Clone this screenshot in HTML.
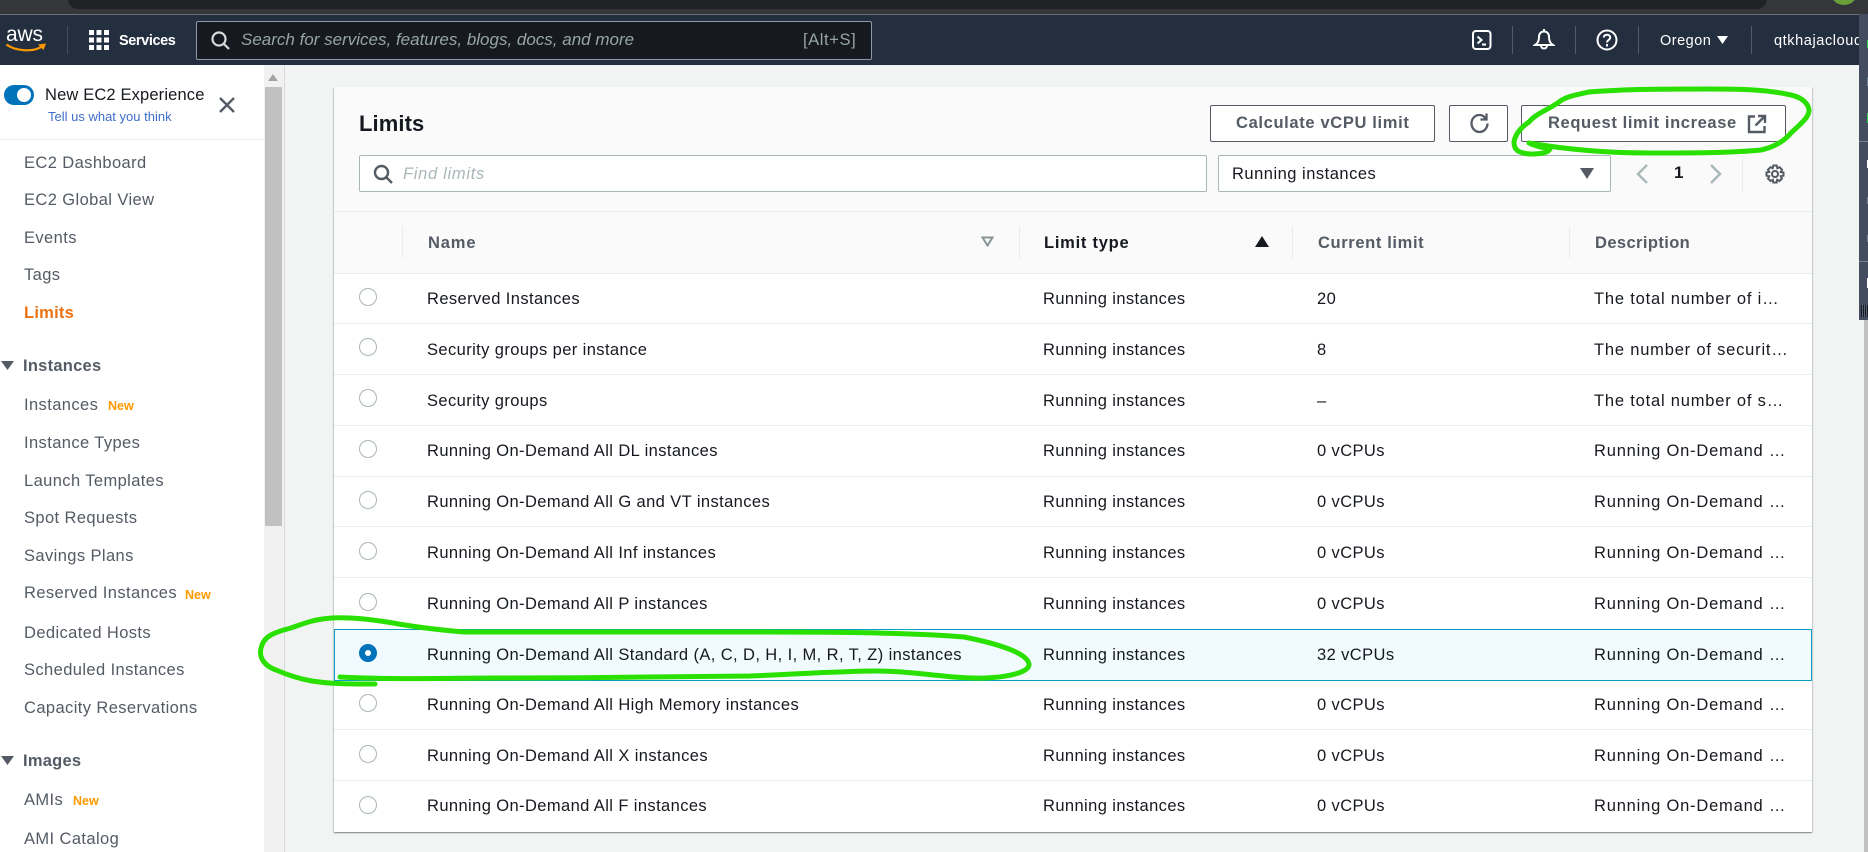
<!DOCTYPE html>
<html><head><meta charset="utf-8"><title>Limits</title>
<style>
html,body{margin:0;padding:0;background:#f2f3f3}
#p{position:relative;width:1868px;height:852px;overflow:hidden;background:#f2f3f3;font-family:"Liberation Sans",sans-serif;color:#16191f}
.a{position:absolute}
.t{position:absolute;white-space:nowrap;line-height:20px;font-size:16.5px;letter-spacing:.4px}
.n{color:#545b64}
.d{left:1594px;letter-spacing:.8px}
.nw{position:absolute;white-space:nowrap;color:#ff9900;font-weight:bold;font-size:12.5px;line-height:14px}
.hr{position:absolute;left:334px;width:1478px;height:1px;background:#eaeded}
.sep{position:absolute;width:1px;background:#545b64;top:26px;height:28px}
.r{position:absolute;left:359px;width:16px;height:16px;border:1.5px solid #aab7b8;border-radius:50%;background:#fff;box-sizing:content-box}
.th{position:absolute;width:1px;background:#eaeded;top:226px;height:32px}
.h{font-weight:bold;color:#545b64}
.btn{position:absolute;top:105px;height:35px;border:1px solid #545b64;border-radius:2px;background:#fff;box-sizing:content-box}
.fld{position:absolute;top:155px;height:35px;border:1px solid #aab7b8;border-radius:2px;background:#fff}
</style></head><body><div id="p">

<!-- browser strip -->
<div class="a" style="left:0;top:0;width:1868px;height:14px;background:#35363a"></div>
<div class="a" style="left:68px;top:-10px;width:1699px;height:19px;background:#202124;border-radius:0 0 10px 10px"></div>
<div class="a" style="left:1833px;top:-10px;width:22px;height:15px;background:#6aa03a;border-radius:50%"></div>
<div class="a" style="left:0;top:14px;width:1868px;height:1px;background:#6d7074"></div>

<!-- nav -->
<div class="a" style="left:0;top:15px;width:1868px;height:50px;background:#232f3e"></div>
<div class="t" style="left:6px;top:25px;color:#fff;font-size:21px;letter-spacing:-.2px;line-height:20px">aws</div>
<svg class="a" style="left:5px;top:42px" width="42" height="13" viewBox="0 0 42 13"><path d="M1.500 2.500C10 9 28 10.500 37 4.500" fill="none" stroke="#f90" stroke-width="2.200"/><path d="M33 2.500L41 1.500L38.500 8" fill="#f90"/></svg>
<div class="a" style="left:67px;top:26px;width:1px;height:28px;background:#414d5c"></div>
<svg class="a" style="left:89px;top:30px" width="20" height="20" fill="#fff"><rect width="5" height="5"/><rect x="7.500" width="5" height="5"/><rect x="15" width="5" height="5"/><rect y="7.500" width="5" height="5"/><rect x="7.500" y="7.500" width="5" height="5"/><rect x="15" y="7.500" width="5" height="5"/><rect y="15" width="5" height="5"/><rect x="7.500" y="15" width="5" height="5"/><rect x="15" y="15" width="5" height="5"/></svg>
<div class="t" style="left:119px;top:31px;color:#fff;font-size:14.500px;font-weight:bold;letter-spacing:-.4px">Services</div>
<div class="a" style="left:196px;top:21px;width:674px;height:37px;background:#16191f;border:1px solid #8d99a8;border-radius:2px"></div>
<svg class="a" style="left:209px;top:29px" width="22" height="22" fill="none" stroke="#d5dbdb" stroke-width="2.200"><circle cx="10" cy="10" r="6.500"/><path d="M14.500 14.500L20 20"/></svg>
<div class="t" style="left:241px;top:30px;color:#95a5a6;font-style:italic;font-size:17px;letter-spacing:0">Search for services, features, blogs, docs, and more</div>
<div class="t" style="left:803px;top:30px;color:#95a5a6;font-size:16.500px;letter-spacing:.6px">[Alt+S]</div>

<svg class="a" style="left:1471px;top:29px" width="22" height="22" fill="none" stroke="#fff" stroke-width="2"><rect x="2" y="2" width="17.500" height="18" rx="3"/><path d="M6.500 7.500L10.500 11L6.500 14.500M11 15.500H15"/></svg>
<div class="sep" style="left:1512px"></div>
<svg class="a" style="left:1533px;top:28px" width="22" height="24" fill="none" stroke="#fff" stroke-width="2"><path d="M2 17C5.500 15 6 12 6 9C6 5.500 8 3.500 11 3.500C14 3.500 16 5.500 16 9C16 12 16.500 15 20 17ZM11 1V3.500M8 17.500C8 21.500 14 21.500 14 17.500"/></svg>
<div class="sep" style="left:1575px"></div>
<svg class="a" style="left:1596px;top:29px" width="22" height="22" fill="none" stroke="#fff" stroke-width="2"><circle cx="11" cy="11" r="9.500"/><path d="M7.800 8.500C7.800 4.800 14.200 4.800 14.200 8.500C14.200 11 11 11 11 13.500"/><path d="M11 15V17.500"/></svg>
<div class="sep" style="left:1638px"></div>
<div class="t" style="left:1660px;top:31px;color:#fff;font-size:14.500px;letter-spacing:.5px">Oregon</div>
<svg class="a" style="left:1717px;top:36px" width="11" height="8"><path d="M0 0H11L5.500 8Z" fill="#fff"/></svg>
<div class="sep" style="left:1751px"></div>
<div class="t" style="left:1774px;top:31px;color:#fff;font-size:14.500px;letter-spacing:.6px;width:85px;overflow:hidden">qtkhajacloud</div>

<!-- right strip -->
<div class="a" style="left:1859px;top:14px;width:9px;height:306px;background:#434d5f"></div>
<div class="a" style="left:1864px;top:320px;width:4px;height:532px;background:#c1c1c1"></div>
<div class="a" style="left:1867px;top:40px;width:1px;height:8px;background:#2ecc40"></div>
<div class="a" style="left:1867px;top:77px;width:1px;height:9px;background:#6f7f96"></div>
<div class="a" style="left:1867px;top:113px;width:1px;height:10px;background:#2ecc40"></div>
<div class="a" style="left:1859px;top:141px;width:9px;height:1px;background:#7a8494"></div>
<div class="a" style="left:1867px;top:160px;width:1px;height:8px;background:#fff"></div>
<div class="a" style="left:1867px;top:197px;width:1px;height:7px;background:#7a8494"></div>
<div class="a" style="left:1867px;top:235px;width:1px;height:7px;background:#7a8494"></div>
<div class="a" style="left:1859px;top:261px;width:9px;height:1px;background:#7a8494"></div>
<div class="a" style="left:1867px;top:278px;width:1px;height:10px;background:#fff"></div>
<div class="a" style="left:1861px;top:305px;width:7px;height:12px;background:repeating-linear-gradient(90deg,#16191f 0 1px,#5a6475 1px 2px)"></div>

<!-- sidebar -->
<div class="a" style="left:0;top:65px;width:264px;height:787px;background:#fff"></div>
<div class="a" style="left:264px;top:65px;width:20px;height:787px;background:#f1f1f1"></div>
<div class="a" style="left:265px;top:87px;width:17px;height:439px;background:#c1c1c1"></div>
<svg class="a" style="left:268px;top:74px" width="10" height="7"><path d="M0 7L5 0L10 7Z" fill="#a3a3a3"/></svg>
<div class="a" style="left:284px;top:65px;width:1px;height:787px;background:#d5dbdb"></div>
<div class="a" style="left:4px;top:85px;width:30px;height:20px;background:#0073bb;border-radius:10px"></div>
<div class="a" style="left:17px;top:88px;width:14px;height:14px;background:#fff;border-radius:50%"></div>
<div class="t" style="left:45px;top:85px;color:#16191f;font-size:16.500px;letter-spacing:.15px">New EC2 Experience</div>
<div class="t" style="left:48px;top:107px;color:#3f6fc9;font-size:13px;letter-spacing:0">Tell us what you think</div>
<svg class="a" style="left:218px;top:96px" width="18" height="18" fill="none" stroke="#545b64" stroke-width="2.400"><path d="M2 2L16 16M16 2L2 16"/></svg>
<div class="a" style="left:0;top:139px;width:264px;height:1px;background:#eaeded"></div>

<div class="t n" style="left:24px;top:153px">EC2 Dashboard</div>
<div class="t n" style="left:24px;top:190px">EC2 Global View</div>
<div class="t n" style="left:24px;top:228px">Events</div>
<div class="t n" style="left:24px;top:265px">Tags</div>
<div class="t" style="left:24px;top:303px;color:#ec7211;font-weight:bold;letter-spacing:.25px">Limits</div>
<svg class="a" style="left:1px;top:361px" width="13" height="9"><path d="M0 0H13L6.500 9Z" fill="#545b64"/></svg>
<div class="t n" style="left:23px;top:356px;font-weight:bold;letter-spacing:.25px">Instances</div>
<div class="t n" style="left:24px;top:395px">Instances</div><div class="nw" style="left:108px;top:399px">New</div>
<div class="t n" style="left:24px;top:433px">Instance Types</div>
<div class="t n" style="left:24px;top:471px">Launch Templates</div>
<div class="t n" style="left:24px;top:508px">Spot Requests</div>
<div class="t n" style="left:24px;top:546px">Savings Plans</div>
<div class="t n" style="left:24px;top:583px">Reserved Instances</div><div class="nw" style="left:185px;top:588px">New</div>
<div class="t n" style="left:24px;top:623px">Dedicated Hosts</div>
<div class="t n" style="left:24px;top:660px">Scheduled Instances</div>
<div class="t n" style="left:24px;top:698px">Capacity Reservations</div>
<svg class="a" style="left:1px;top:756px" width="13" height="9"><path d="M0 0H13L6.500 9Z" fill="#545b64"/></svg>
<div class="t n" style="left:23px;top:751px;font-weight:bold;letter-spacing:.25px">Images</div>
<div class="t n" style="left:24px;top:790px">AMIs</div><div class="nw" style="left:73px;top:794px">New</div>
<div class="t n" style="left:24px;top:829px">AMI Catalog</div>

<!-- card -->
<div class="a" style="left:334px;top:87px;width:1478px;height:745px;background:#fff;box-shadow:0 1px 1px 0 rgba(0,28,36,.3),1px 1px 1px 0 rgba(0,28,36,.15),-1px 1px 1px 0 rgba(0,28,36,.15)"></div>
<div class="a" style="left:334px;top:87px;width:1478px;height:186px;background:#fafafa"></div>
<div class="t" style="left:359px;top:114px;font-size:22px;font-weight:bold;letter-spacing:.1px">Limits</div>

<div class="btn" style="left:1210px;width:223px"></div>
<div class="t h" style="left:1236px;top:113px;font-size:16.500px;letter-spacing:.65px">Calculate vCPU limit</div>
<div class="btn" style="left:1449px;width:57px"></div>
<svg class="a" style="left:1468px;top:112px" width="23" height="23" fill="none" stroke="#545b64" stroke-width="2.300"><path d="M17.500 6.500C16 4 14 3 11.500 3C7 3 3.500 6.500 3.500 11.500C3.500 16 7 20 11.500 20C16 20 19.500 16 19.500 11.500"/><path d="M18.500 1.500V7.500H12.500"/></svg>
<div class="btn" style="left:1521px;width:263px"></div>
<div class="t h" style="left:1548px;top:113px;font-size:16.500px;letter-spacing:.62px">Request limit increase</div>
<svg class="a" style="left:1747px;top:114px" width="20" height="20" fill="none" stroke="#545b64" stroke-width="2.400"><path d="M8 2.500H2V18H17.500V12M11 2H18V9M18 2L8.500 11.500"/></svg>

<div class="fld" style="left:359px;width:846px"></div>
<svg class="a" style="left:372px;top:163px" width="22" height="22" fill="none" stroke="#545b64" stroke-width="2.400"><circle cx="9.500" cy="9.500" r="6.500"/><path d="M14 14L20 20"/></svg>
<div class="t" style="left:403px;top:164px;color:#aab7b8;font-style:italic;letter-spacing:.7px">Find limits</div>
<div class="fld" style="left:1218px;width:391px"></div>
<div class="t" style="left:1232px;top:164px;letter-spacing:.5px">Running instances</div>
<svg class="a" style="left:1580px;top:168px" width="14" height="11"><path d="M0 0H14L7 11Z" fill="#545b64"/></svg>
<svg class="a" style="left:1635px;top:163px" width="14" height="22" fill="none" stroke="#aab7b8" stroke-width="2.400"><path d="M12 2L3 11L12 20"/></svg>
<div class="t" style="left:1674px;top:163px;font-weight:bold;font-size:17px">1</div>
<svg class="a" style="left:1709px;top:163px" width="14" height="22" fill="none" stroke="#aab7b8" stroke-width="2.400"><path d="M2 2L11 11L2 20"/></svg>
<div class="a" style="left:1742px;top:155px;width:1px;height:37px;background:#eaeded"></div>
<svg class="a" style="left:1765px;top:164px" width="20" height="20" viewBox="0 0 20 20" fill="none" stroke="#545b64" stroke-width="2"><path d="M8.300 1.500H11.700L12.300 4.200L14.600 3.200L17 5.700L15.800 8L18.500 8.500V11.700L15.800 12.200L17 14.500L14.500 17L12.200 15.800L11.700 18.500H8.300L7.800 15.800L5.500 17L3 14.500L4.200 12.200L1.500 11.700V8.500L4.200 8L3 5.700L5.500 3.200L7.700 4.200Z"/><circle cx="10" cy="10" r="3"/></svg>
<div class="hr" style="top:211px"></div>

<!-- table head -->
<div class="th" style="left:402px"></div><div class="th" style="left:1019px"></div><div class="th" style="left:1292px"></div><div class="th" style="left:1569px"></div>
<div class="t h" style="left:428px;top:233px;letter-spacing:.85px">Name</div>
<svg class="a" style="left:981px;top:236px" width="13" height="11" fill="none" stroke="#879596" stroke-width="2"><path d="M1.500 1.500H11.500L6.500 9.500Z"/></svg>
<div class="t" style="left:1044px;top:233px;font-weight:bold;letter-spacing:.75px">Limit type</div>
<svg class="a" style="left:1255px;top:236px" width="14" height="11"><path d="M0 11H14L7 0Z" fill="#16191f"/></svg>
<div class="t h" style="left:1318px;top:233px;letter-spacing:.63px">Current limit</div>
<div class="t h" style="left:1595px;top:233px;letter-spacing:.4px">Description</div>

<div class="hr" style="top:273px"></div><div class="hr" style="top:323px"></div><div class="hr" style="top:374px"></div><div class="hr" style="top:425px"></div><div class="hr" style="top:476px"></div><div class="hr" style="top:526px"></div><div class="hr" style="top:577px"></div><div class="hr" style="top:729px"></div><div class="hr" style="top:780px"></div>
<div class="a" style="left:334px;top:629px;width:1476px;height:50px;background:#f1faff;border:1px solid #0aa0c4"></div>

<!-- rows -->
<div class="r" style="top:288px"></div><div class="t" style="left:427px;top:289px">Reserved Instances</div><div class="t" style="left:1043px;top:289px">Running instances</div><div class="t" style="left:1317px;top:289px">20</div><div class="t d" style="top:289px">The total number of i…</div>
<div class="r" style="top:338px"></div><div class="t" style="left:427px;top:340px">Security groups per instance</div><div class="t" style="left:1043px;top:340px">Running instances</div><div class="t" style="left:1317px;top:340px">8</div><div class="t d" style="top:340px">The number of securit…</div>
<div class="r" style="top:389px"></div><div class="t" style="left:427px;top:391px">Security groups</div><div class="t" style="left:1043px;top:391px">Running instances</div><div class="t" style="left:1317px;top:391px">–</div><div class="t d" style="top:391px">The total number of s…</div>
<div class="r" style="top:440px"></div><div class="t" style="left:427px;top:441px">Running On-Demand All DL instances</div><div class="t" style="left:1043px;top:441px">Running instances</div><div class="t" style="left:1317px;top:441px">0 vCPUs</div><div class="t d" style="top:441px">Running On-Demand …</div>
<div class="r" style="top:491px"></div><div class="t" style="left:427px;top:492px">Running On-Demand All G and VT instances</div><div class="t" style="left:1043px;top:492px">Running instances</div><div class="t" style="left:1317px;top:492px">0 vCPUs</div><div class="t d" style="top:492px">Running On-Demand …</div>
<div class="r" style="top:542px"></div><div class="t" style="left:427px;top:543px">Running On-Demand All Inf instances</div><div class="t" style="left:1043px;top:543px">Running instances</div><div class="t" style="left:1317px;top:543px">0 vCPUs</div><div class="t d" style="top:543px">Running On-Demand …</div>
<div class="r" style="top:593px"></div><div class="t" style="left:427px;top:594px">Running On-Demand All P instances</div><div class="t" style="left:1043px;top:594px">Running instances</div><div class="t" style="left:1317px;top:594px">0 vCPUs</div><div class="t d" style="top:594px">Running On-Demand …</div>
<div class="a" style="left:359px;top:644px;width:18px;height:18px;box-sizing:border-box;border:6px solid #0073bb;border-radius:50%;background:#fff"></div><div class="t" style="left:427px;top:645px">Running On-Demand All Standard (A, C, D, H, I, M, R, T, Z) instances</div><div class="t" style="left:1043px;top:645px">Running instances</div><div class="t" style="left:1317px;top:645px">32 vCPUs</div><div class="t d" style="top:645px">Running On-Demand …</div>
<div class="r" style="top:694px"></div><div class="t" style="left:427px;top:695px">Running On-Demand All High Memory instances</div><div class="t" style="left:1043px;top:695px">Running instances</div><div class="t" style="left:1317px;top:695px">0 vCPUs</div><div class="t d" style="top:695px">Running On-Demand …</div>
<div class="r" style="top:745px"></div><div class="t" style="left:427px;top:746px">Running On-Demand All X instances</div><div class="t" style="left:1043px;top:746px">Running instances</div><div class="t" style="left:1317px;top:746px">0 vCPUs</div><div class="t d" style="top:746px">Running On-Demand …</div>
<div class="r" style="top:796px"></div><div class="t" style="left:427px;top:796px">Running On-Demand All F instances</div><div class="t" style="left:1043px;top:796px">Running instances</div><div class="t" style="left:1317px;top:796px">0 vCPUs</div><div class="t d" style="top:796px">Running On-Demand …</div>

<!-- green scribbles -->
<svg class="a" style="left:0;top:0" width="1868" height="852" fill="none" stroke="#29e000" stroke-width="5" stroke-linecap="round" stroke-linejoin="round">
<path d="M1529 143C1570 150 1610 153 1648 153C1690 153 1730 153 1761 150C1775 147 1785 140 1791 133C1800 124 1809 118 1809 110C1808 102 1800 97 1791 95C1765 89 1735 89 1708 89C1670 89 1625 89 1589 92C1575 95 1565 97 1559 102C1548 110 1535 114 1529 122C1520 128 1515 135 1514 142C1514 150 1518 153 1530 154C1540 154 1548 153 1550 149C1540 147 1535 146 1529 143"/>
<path d="M340 677C400 680 450 678 495 678C580 678 670 677 750 676C800 674 840 671 878 671C915 671 950 679 985 678C1010 677 1028 672 1029 665C1029 655 1005 645 964 637C900 632 820 632 750 632C650 632 550 632 464 632C440 630 415 627 393 623C370 619 350 617 332 618C315 619 305 623 291 628C275 632 265 636 262 645C258 655 262 665 276 670C290 676 300 679 312 681C330 684 350 684 375 684"/>
</svg>
</div></body></html>
